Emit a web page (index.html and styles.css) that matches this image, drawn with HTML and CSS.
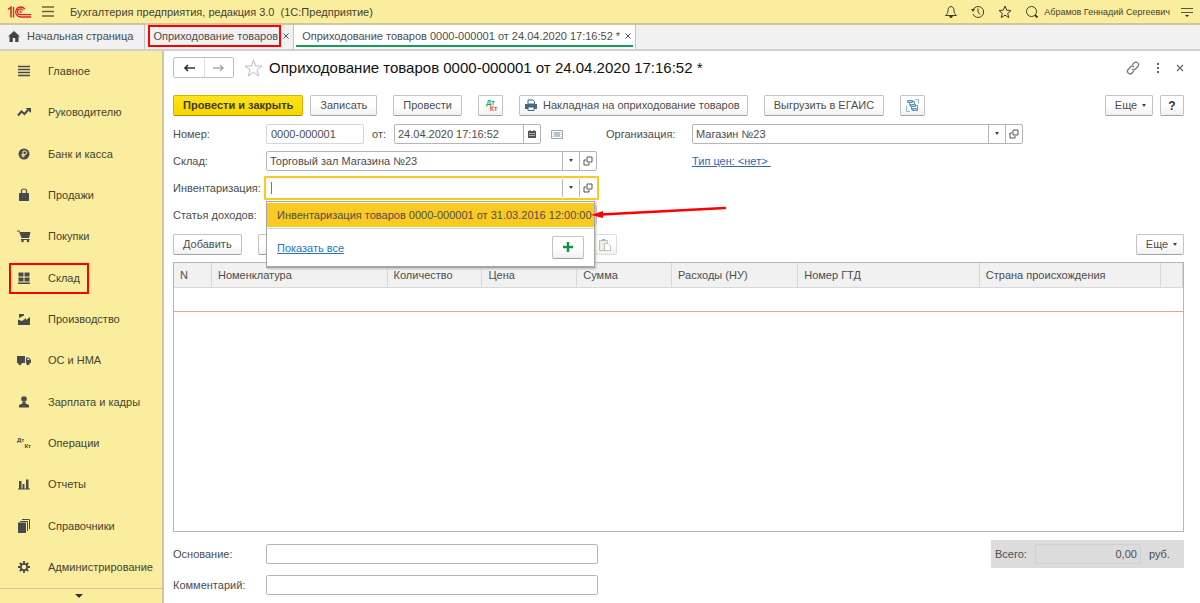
FILE: index.html
```html
<!DOCTYPE html>
<html lang="ru">
<head>
  <meta charset="UTF-8" />
  <meta name="viewport" content="width=device-width, initial-scale=1.0" />
  <title>Оприходование товаров</title>
  <link rel="stylesheet" href="styles.css">
</head>
<body>

<!-- Shared icons -->
<svg class="sprite" aria-hidden="true">
  <symbol id="i-open" viewBox="0 0 10 10">
    <path d="M4 1h5v5H4zM3 4H1v5h5V7" fill="none" stroke="#555" />
  </symbol>
  <symbol id="i-down" viewBox="0 0 6 4">
    <path d="M1 0h4L3 3z" fill="#444" />
  </symbol>
</svg>

<header class="topbar">
  <svg class="logo" width="25" height="14" viewBox="0 0 25 14" fill="none" stroke="#d8232a">
    <path d="M1 4.500L4 2.200V12.500" stroke-width="1.500" />
    <path d="M6.500 2v10.500" stroke-width="1.300" />
    <path d="M17.800 4.200A5 5 0 1 0 13.500 12H24" stroke-width="1.300" />
    <path d="M15.800 5.600A2.800 2.800 0 1 0 13.500 9.600H24" stroke-width="1.200" />
    <circle cx="13.500" cy="6.800" r="0.800" />
  </svg>
  <button class="icon-btn menu-btn" aria-label="Меню">
    <svg width="12" height="11" viewBox="0 0 12 11"><path d="M0 1h12M0 5.500h12M0 10h12" stroke="#6b6540" stroke-width="1.400" /></svg>
  </button>
  <span class="app-title">Бухгалтерия предприятия, редакция 3.0 &nbsp;(1С:Предприятие)</span>
  <div class="top-tools">
    <button class="icon-btn" aria-label="Уведомления">
      <svg width="14" height="14" viewBox="0 0 14 14" fill="none" stroke="#3f3d2c"><path d="M7 1.500C4.500 1.800 4 4 4 6c0 2-1 3-2.500 4.500h11C11 9 10 8 10 6c0-2-.5-4.200-3-4.500z" /><path d="M5.500 11h3L7 13z" fill="#3f3d2c" /></svg>
    </button>
    <button class="icon-btn" aria-label="История">
      <svg width="14" height="14" viewBox="0 0 14 14" fill="none" stroke="#3f3d2c"><path d="M2 5a5.500 5.500 0 1 1 0 4" /><path d="M7 3.500V7l2 2.500" /><path d="M0 4h4L2 7z" fill="#3f3d2c" stroke="none" /></svg>
    </button>
    <button class="icon-btn" aria-label="Избранное">
      <svg width="14" height="14" viewBox="0 0 14 14" fill="none" stroke="#3f3d2c"><path d="M7 1l1.700 4.200 4.300.3-3.300 2.800 1.100 4.300L7 10.200l-3.800 2.400 1.100-4.300L1 5.500l4.300-.3z" /></svg>
    </button>
    <button class="icon-btn" aria-label="Поиск">
      <svg width="14" height="14" viewBox="0 0 14 14" fill="none" stroke="#3f3d2c"><circle cx="6.500" cy="6.500" r="5" /><path d="M10 10l2.500 2.500" stroke-width="2" /></svg>
    </button>
    <span class="user">Абрамов Геннадий Сергеевич</span>
    <button class="icon-btn" aria-label="Настройки">
      <svg width="12" height="12" viewBox="0 0 12 12"><path d="M0 2.500h12M0 6.500h12" stroke="#5a563a" stroke-width="1.200" /><path d="M4 9h4l-2 2z" fill="#222" /></svg>
    </button>
  </div>
</header>

<nav class="tabs">
  <a class="tab tab-home" href="#">
    <svg width="12" height="11" viewBox="0 0 12 11"><path d="M6 0l6 5.500h-1.500V11H7.200V7H4.800v4H1.500V5.500H0z" fill="#444" /></svg>
    Начальная страница
  </a>
  <div class="tab">
    <a class="marked" href="#">Оприходование товаров</a>
    <button class="tab-close" aria-label="Закрыть"><svg width="6" height="6" viewBox="0 0 6 6"><path d="M.5.5l5 5M5.500.5l-5 5" stroke="#555" /></svg></button>
  </div>
  <div class="tab tab-active">
    <a href="#">Оприходование товаров 0000-000001 от 24.04.2020 17:16:52 *</a>
    <button class="tab-close" aria-label="Закрыть"><svg width="6" height="6" viewBox="0 0 6 6"><path d="M.5.5l5 5M5.500.5l-5 5" stroke="#555" /></svg></button>
  </div>
</nav>

<div class="workspace">
  <aside class="sidebar">
    <nav class="sections">
      <a href="#"><svg viewBox="0 0 14 14"><path d="M1 2.500h12M1 5.500h12M1 8.500h12M1 11.500h12" stroke="#4a4a4a" stroke-width="1.500" /></svg>Главное</a>
      <a href="#"><svg viewBox="0 0 14 14"><path d="M1 10.500l3.500-4 3 2.500L11 5" fill="none" stroke="#4a4a4a" stroke-width="2" /><path d="M8.500 3H14v5z" fill="#4a4a4a" /></svg>Руководителю</a>
      <a href="#"><svg viewBox="0 0 14 14"><circle cx="7" cy="7" r="5.500" fill="#4a4a4a" /><path d="M6 10.500V4h2a1.700 1.700 0 0 1 0 3.500H4.500M4.500 9H8" fill="none" stroke="#fbed9e" /></svg>Банк и касса</a>
      <a href="#"><svg viewBox="0 0 14 14"><path d="M2 5h10v8H2z" fill="#4a4a4a" /><path d="M4.500 6V3a2.500 2 0 0 1 5 0v3" fill="none" stroke="#4a4a4a" stroke-width="1.200" /></svg>Продажи</a>
      <a href="#"><svg viewBox="0 0 14 14"><path d="M0 1.500h2.500L3 3h10.500l-1.500 6H4.500L2 2.500H0zM4 10h8.500v1H4z" fill="#4a4a4a" /><circle cx="5.500" cy="12" r="1.300" fill="#4a4a4a" /><circle cx="11" cy="12" r="1.300" fill="#4a4a4a" /></svg>Покупки</a>
      <a class="marked" href="#"><svg viewBox="0 0 14 14"><path d="M1.500 1.500h5v4h-5zM7.500 1.500h5v4h-5zM1.500 6.500h5v4h-5zM7.500 6.500h5v4h-5zM1 11.500h12V13H1z" fill="#4a4a4a" /></svg>Склад</a>
      <a href="#"><svg viewBox="0 0 14 14"><path d="M1 13V7.500l4 1.500 4-3v2l4-3v8zM2 2h5v1.500L2 6z" fill="#4a4a4a" /></svg>Производство</a>
      <a href="#"><svg viewBox="0 0 14 14"><path d="M0 3h8v7H0zM9 4.500h3l2 2.500v3H9z" fill="#4a4a4a" /><circle cx="3" cy="10.500" r="1.700" fill="#4a4a4a" /><circle cx="11" cy="10.500" r="1.700" fill="#4a4a4a" /><path d="M10.500 5.500h1.300l.9 1.500h-2.200z" fill="#fbed9e" /></svg>ОС и НМА</a>
      <a href="#"><svg viewBox="0 0 14 14"><circle cx="7" cy="4" r="2.800" fill="#4a4a4a" /><path d="M2 12.500V10l3.500-1.500V7h3v1.500L12 10v2.500z" fill="#4a4a4a" /></svg>Зарплата и кадры</a>
      <a href="#"><span class="dtkt"><i>Дт</i><b>Кт</b></span>Операции</a>
      <a href="#"><svg viewBox="0 0 14 14"><path d="M2 4h2.500v8H2zM5.500 7h2v5h-2zM9 2.500h2.500V12H9zM1 11.500h12v1H1z" fill="#4a4a4a" /></svg>Отчеты</a>
      <a href="#"><svg viewBox="0 0 14 14"><path d="M1 3.500h8V14H1z" fill="#4a4a4a" /><path d="M3 2.500h7.500V12M5 .5h7.500V10" fill="none" stroke="#4a4a4a" /></svg>Справочники</a>
      <a href="#"><svg viewBox="0 0 14 14"><circle cx="7" cy="7" r="3.200" fill="none" stroke="#4a4a4a" stroke-width="1.800" /><path d="M7 1v2.500M7 10.500V13M1 7h2.500M10.500 7H13M2.800 2.800l1.700 1.700M9.500 9.500l1.700 1.700M11.200 2.800L9.500 4.500M4.500 9.500l-1.700 1.700" stroke="#4a4a4a" stroke-width="1.800" /></svg>Администрирование</a>
    </nav>
    <button class="scroll-down" aria-label="Вниз"><svg width="8" height="4" viewBox="0 0 8 4"><path d="M0 0h8L4 4z" fill="#333" /></svg></button>
  </aside>

  <main class="document">
    <div class="title-row">
      <div class="history">
        <button aria-label="Назад"><svg width="12" height="8" viewBox="0 0 12 8"><path d="M12 4H2M5 1L2 4l3 3" fill="none" stroke="#333" stroke-width="1.700" /></svg></button>
        <button aria-label="Вперед"><svg width="12" height="8" viewBox="0 0 12 8"><path d="M0 4h10M7 1l3 3-3 3" fill="none" stroke="#aaa" stroke-width="1.500" /></svg></button>
      </div>
      <button class="icon-btn" aria-label="В избранное">
        <svg width="19" height="18" viewBox="0 0 19 18"><path d="M9.500 1l2.100 6H18l-5 4 1.800 6-5.300-3.600L4.200 17 6 11 1 7h6.400z" fill="none" stroke="#b5bcc4" /></svg>
      </button>
      <h1>Оприходование товаров 0000-000001 от 24.04.2020 17:16:52 *</h1>
      <div class="window-tools">
        <button class="icon-btn" aria-label="Ссылка"><svg width="14" height="14" viewBox="0 0 14 14" fill="none" stroke="#777" stroke-width="1.200"><path d="M6 4l2-2a2.500 2.500 0 0 1 3.800 3.500L9.500 8A2.300 2.300 0 0 1 6 8" /><path d="M8 10l-2 2a2.500 2.500 0 0 1-3.800-3.500L4.500 6A2.300 2.300 0 0 1 8 6" /></svg></button>
        <button class="icon-btn" aria-label="Действия"><svg width="4" height="10" viewBox="0 0 4 10"><path d="M1 0h2v2H1zM1 4h2v2H1zM1 8h2v2H1z" fill="#666" /></svg></button>
        <button class="icon-btn" aria-label="Закрыть"><svg width="8" height="8" viewBox="0 0 8 8"><path d="M1 1l6 6M7 1L1 7" stroke="#666" stroke-width="1.200" /></svg></button>
      </div>
    </div>

    <div class="toolbar">
      <div class="pair">
        <button class="btn btn-main">Провести и закрыть</button>
        <button class="btn">Записать</button>
      </div>
      <button class="btn">Провести</button>
      <button class="btn btn-square"><span class="dtkt dtkt-color"><i>Дт</i><b>Кт</b></span></button>
      <button class="btn btn-print">
        <svg width="12" height="12" viewBox="0 0 12 12"><path d="M3 1h5l1.500 1.500V5H3z" fill="#fff" stroke="#456985" /><path d="M0 5h12v5H0z" fill="#456985" /><path d="M3 8h6v3.500H3z" fill="#fff" stroke="#456985" /></svg>
        Накладная на оприходование товаров
      </button>
      <button class="btn">Выгрузить в ЕГАИС</button>
      <button class="btn btn-square" aria-label="Структура подчиненности">
        <svg width="13" height="13" viewBox="0 0 13 13" fill="none" stroke="#5b93bb"><path d="M1.500 1.500h5v2h-5zM4.500 5.500h5v2h-5zM6.500 9.500h5v2h-5z" fill="#a9cbe2" /><path d="M7 2.500h1.500V5M10 6.500h1.500V9M3.500 4v2.500M5.500 8v2.500H7" /><path d="M9.500.5h3v4M.5 7v5.500H4" stroke="#8fb9d6" /></svg>
      </button>
      <div class="pair push">
        <button class="btn btn-more">Еще <svg width="6" height="4"><use href="#i-down" /></svg></button>
        <button class="btn btn-square btn-help">?</button>
      </div>
    </div>

    <form class="fields">
      <label for="number">Номер:</label>
      <div class="number-date">
        <input class="text number" id="number" type="text" value="0000-000001">
        <label for="date">от:</label>
        <div class="combo date">
          <input id="date" type="text" value="24.04.2020 17:16:52">
          <button type="button" aria-label="Календарь"><svg width="8" height="8" viewBox="0 0 8 8"><path d="M0 1h8v7H0z" fill="#555" /><path d="M1 3.500h6M1 5.500h6" stroke="#aaa" /><path d="M2 0v2M6 0v2" stroke="#555" /></svg></button>
        </div>
        <svg width="12" height="9" viewBox="0 0 12 9"><path d="M.5.5h11v8H.5z" fill="#fff" stroke="#9aa8b4" /><path d="M3 2h6v5H3z" fill="#b9c3cb" /><path d="M2 2v5M10 2v5" stroke="#b9c3cb" stroke-dasharray="1 1" /></svg>
      </div>
      <label for="org">Организация:</label>
      <div class="combo org">
        <input id="org" type="text" value="Магазин №23">
        <button type="button" aria-label="Выбрать"><svg width="6" height="4"><use href="#i-down" /></svg></button>
        <button type="button" aria-label="Открыть"><svg width="10" height="10"><use href="#i-open" /></svg></button>
      </div>

      <label class="row-start" for="store">Склад:</label>
      <div class="combo">
        <input id="store" type="text" value="Торговый зал Магазина №23">
        <button type="button" aria-label="Выбрать"><svg width="6" height="4"><use href="#i-down" /></svg></button>
        <button type="button" aria-label="Открыть"><svg width="10" height="10"><use href="#i-open" /></svg></button>
      </div>
      <a class="price-type" href="#">Тип цен: &lt;нет&gt;&nbsp;</a>

      <label class="row-start" for="inventory">Инвентаризация:</label>
      <div class="combo combo-focus">
        <span class="caret"></span>
        <input id="inventory" type="text">
        <button type="button" aria-label="Выбрать"><svg width="6" height="4"><use href="#i-down" /></svg></button>
        <button type="button" aria-label="Открыть"><svg width="10" height="10"><use href="#i-open" /></svg></button>
        <div class="suggest">
          <button class="suggest-item" type="button">Инвентаризация товаров 0000-000001 от 31.03.2016 12:00:00</button>
          <div class="suggest-footer">
            <a href="#">Показать все</a>
            <button class="btn btn-add" type="button" aria-label="Создать"><svg width="10" height="10" viewBox="0 0 10 10"><path d="M5 0v10M0 5h10" stroke="#11963f" stroke-width="2.500" /></svg></button>
          </div>
          <svg class="pointer" width="138" height="14" viewBox="0 0 138 14"><path d="M10 8.500L134 2" stroke="#f00" stroke-width="2.500" stroke-linecap="round" /><path d="M0 9l12-4v7z" fill="#f00" /></svg>
        </div>
      </div>

      <label class="row-start" for="income">Статья доходов:</label>
      <div class="combo">
        <input id="income" type="text">
      </div>
    </form>

    <div class="list-bar">
      <div class="list-tools">
        <button class="btn">Добавить</button>
        <button class="btn btn-square" aria-label="Вверх"></button>
        <button class="btn btn-square btn-off push" aria-label="Вставить"><svg width="12" height="12" viewBox="0 0 12 12"><path d="M.5 1.500h8v10h-8z" fill="#f3ece3" stroke="#cdbba6" /><path d="M3 0h3v2H3z" fill="#a8b0b8" /><path d="M5.500 4.500H9L11.500 7v4.500h-6z" fill="#fff" stroke="#b4bec6" /></svg></button>
      </div>
      <button class="btn btn-more push">Еще <svg width="6" height="4"><use href="#i-down" /></svg></button>
    </div>

    <div class="grid">
      <table>
        <thead>
          <tr>
            <th class="c-n">N</th>
            <th class="c-item">Номенклатура</th>
            <th class="c-num">Количество</th>
            <th class="c-num">Цена</th>
            <th class="c-num">Сумма</th>
            <th class="c-cost">Расходы (НУ)</th>
            <th class="c-wide">Номер ГТД</th>
            <th class="c-wide">Страна происхождения</th>
            <th></th>
          </tr>
        </thead>
        <tbody>
          <tr><td colspan="9"></td></tr>
        </tbody>
      </table>
    </div>

    <footer class="bottom">
      <div class="notes">
        <label for="basis">Основание:</label>
        <input class="text" id="basis" type="text">
        <label for="comment">Комментарий:</label>
        <input class="text" id="comment" type="text">
      </div>
      <div class="total">
        <label for="total">Всего:</label>
        <input id="total" type="text" value="0,00" readonly>
        <span>руб.</span>
      </div>
    </footer>
  </main>
</div>

</body>
</html>
```
FILE: styles.css
```css
* {
  box-sizing: border-box;
}

body {
  font-family: "Liberation Sans", Arial, sans-serif;
  font-size: 11px;
  color: #4d4d4d;
  background: #fff;
  margin: 0;
  min-height: 100vh;
  display: flex;
  flex-direction: column;
}

button,
input {
  font: inherit;
  color: inherit;
  margin: 0;
}

button {
  cursor: pointer;
}

svg {
  flex: none;
}

.sprite {
  position: absolute;
  width: 0;
  height: 0;
}

.icon-btn {
  display: flex;
  padding: 0;
  border: none;
  background: none;
}

.push {
  margin-left: auto;
}

/* Top bar */
.topbar {
  display: flex;
  align-items: center;
  height: 25px;
  padding: 0 7px;
  background: #fbed9e;
  border-bottom: 2px solid #cfc79c;
}

.menu-btn {
  margin: 0 16px 0 10px;
}

.app-title {
  color: #45432f;
}

.top-tools {
  display: flex;
  align-items: center;
  gap: 13px;
  margin-left: auto;
}

.user {
  font-size: 9px;
  color: #45432f;
  margin: 0 -2px 0 -8px;
}

/* Tabs */
.tabs {
  display: flex;
  height: 26px;
  background: #f1f1f1;
  border-bottom: 2px solid #d0d0d0;
}

.tab {
  display: flex;
  align-items: center;
  gap: 5px;
  padding: 0 4px 2px 8px;
  border-right: 1px solid #c4c4c4;
}

.tab a,
.tab-home {
  color: #4d4d4d;
  text-decoration: none;
}

.tab-home {
  gap: 7px;
  padding-right: 11px;
}

.tab-active {
  background: #fff;
  box-shadow: inset 2px 0 #fff, inset -2px 0 #fff, inset 0 -2px #fff, inset 0 -4px #12a05a;
}

.tab-close {
  display: flex;
  padding: 0;
  border: none;
  background: none;
}

.marked {
  position: relative;
}

/* Red highlight frame */
.marked::after {
  content: "";
  position: absolute;
  inset: -5px -3px -5px -5px;
  border: 2px solid #f00;
}

.workspace {
  display: flex;
  flex: 1;
}

/* Sidebar */
.sidebar {
  display: flex;
  flex-direction: column;
  flex: none;
  width: 164px;
  background: #fbed9e;
  border-right: 2px solid #cfc79c;
}

.sections {
  display: flex;
  flex-direction: column;
  flex: 1;
}

.sections a {
  display: flex;
  align-items: center;
  flex: 1;
  gap: 17px;
  padding: 0 0 1px 17px;
  color: #45432f;
  text-decoration: none;
}

.sections svg {
  width: 14px;
  height: 14px;
}

.sections .marked::after {
  inset: 5px 73px 5px 9px;
}

.dtkt {
  display: flex;
  flex-direction: column;
  width: 14px;
  font-size: 6px;
  line-height: 6px;
  font-weight: bold;
}

.dtkt i {
  font-style: normal;
}

.dtkt b {
  text-align: right;
}

.dtkt-color {
  font-size: 7px;
}

.dtkt-color i {
  color: #18a35c;
}

.dtkt-color b {
  color: #e8504f;
}

.scroll-down {
  display: flex;
  align-items: center;
  justify-content: center;
  height: 15px;
  padding: 0 4px 0 0;
  border: none;
  border-top: 1px solid #cfc79c;
  background: none;
}

/* Document */
.document {
  display: flex;
  flex-direction: column;
  flex: 1;
  min-width: 0;
  padding: 6px 16px 8px 9px;
}

.title-row {
  display: flex;
  align-items: center;
  gap: 10px;
  margin-bottom: 17px;
}

.history {
  display: flex;
  border: 1px solid #bdbdbd;
  border-radius: 2px;
}

.history button {
  display: flex;
  align-items: center;
  justify-content: center;
  width: 30px;
  height: 19px;
  padding: 0;
  border: none;
  background: #fff;
}

.history button + button {
  width: 29px;
  border-left: 1px solid #ddd;
}

h1 {
  margin: 0 0 0 -4px;
  font-size: 15px;
  line-height: 20px;
  font-weight: normal;
  color: #111;
}

.window-tools {
  display: flex;
  align-items: center;
  gap: 16px;
  margin-left: auto;
}

.btn {
  display: flex;
  align-items: center;
  justify-content: center;
  height: 21px;
  padding: 0 9px 1px;
  border: 1px solid #c3c3c3;
  border-bottom-color: #a3a3a3;
  border-radius: 2px;
  background: linear-gradient(#fff 50%, #f0f0f0);
  white-space: nowrap;
}

.btn-main {
  border-color: #d3b500;
  border-bottom-color: #a98f00;
  background: linear-gradient(#ffe21a, #f6d600);
  font-weight: bold;
  color: #3d3a1e;
}

.btn-square {
  width: 25px;
  padding: 0;
}

.btn-help {
  width: 24px;
  font-size: 12px;
  font-weight: bold;
  color: #333;
}

.btn-print {
  gap: 6px;
  padding: 0 7px 1px 5px;
}

.btn-more {
  gap: 4px;
  width: 48px;
  padding: 0 4px 1px 8px;
}

.btn-more svg {
  margin-top: 2px;
}

.btn-off {
  border-color: #ddd;
}

.toolbar,
.list-tools {
  display: flex;
  gap: 16px;
}

.pair {
  display: flex;
  gap: 7px;
}

.toolbar {
  margin-bottom: 8px;
}

/* Header fields */
.fields {
  display: grid;
  grid-template-columns: 93px minmax(0, 340fr) 86px minmax(0, 331fr) minmax(0, 161fr);
  grid-auto-rows: 20px;
  row-gap: 7px;
  align-items: center;
  margin-bottom: 9px;
}

.row-start {
  grid-column: 1;
}

.text,
.combo {
  height: 20px;
  border: 1px solid #b5b5b5;
  border-radius: 2px;
  background: #fff;
}

.text {
  min-width: 0;
  padding: 0 4px;
}

.combo {
  display: flex;
  position: relative;
  margin-right: 9px;
}

.combo input {
  flex: 1;
  min-width: 0;
  padding: 0 3px 1px;
  border: none;
  background: none;
  outline: none;
}

.combo > button {
  display: flex;
  align-items: center;
  justify-content: center;
  width: 17px;
  padding: 0;
  border: none;
  border-left: 1px solid #b5b5b5;
  background: none;
}

.number-date {
  display: flex;
  align-items: center;
  gap: 8px;
}

.number-date .number {
  width: 98px;
  border-color: #d6d6d6;
}

.combo.date {
  width: 147px;
  margin-right: 2px;
}

.combo.org {
  margin-right: 0;
}

.price-type {
  grid-column: 4;
  color: #2f66b5;
}

.combo-focus {
  border-color: #fff;
  border-radius: 0;
  outline: 2px solid #fbca22;
}

.caret {
  width: 1px;
  height: 12px;
  margin: 3px 0 3px 4px;
  background: #777;
}

/* Suggestions list */
.suggest {
  position: absolute;
  z-index: 1;
  top: 22px;
  left: -1px;
  width: 329px;
  padding: 1px 0 0;
  border: 1px solid #a6a6a6;
  border-bottom-width: 2px;
  background: #fff;
  box-shadow: 1px 1px 2px #bbb;
}

.suggest-item {
  display: block;
  width: 100%;
  height: 24px;
  padding: 0 0 1px 10px;
  border: none;
  background: #fbca22;
  text-align: left;
  white-space: nowrap;
}

.suggest-footer {
  display: flex;
  align-items: center;
  justify-content: space-between;
  height: 38px;
  margin-top: 1px;
  padding: 0 10px;
  border-top: 1px solid #d5d5d5;
}

.suggest-footer a {
  color: #2478b8;
}

.btn-add {
  width: 32px;
  height: 23px;
}

.pointer {
  position: absolute;
  top: 4px;
  left: 324px;
}

/* Goods list */
.list-bar {
  display: flex;
  margin-bottom: 7px;
}

.list-tools {
  width: 444px;
}

.grid {
  flex: 1;
  border: 1px solid #b5b5b5;
}

.grid table {
  width: 100%;
  table-layout: fixed;
  border-spacing: 0;
}

.grid th {
  height: 25px;
  padding: 0 6px 1px;
  border-right: 1px solid #d8d8d8;
  border-bottom: 1px solid #d8d8d8;
  background: #f1f1f1;
  font-weight: normal;
  text-align: left;
  white-space: nowrap;
}

.grid td {
  height: 24px;
  padding: 0;
  border-bottom: 1px solid #f39a9a;
}

.c-n {
  width: 38px;
}

.c-item {
  width: 17.4%;
}

.c-num {
  width: 9.4%;
}

.c-cost {
  width: 12.5%;
}

.c-wide {
  width: 18%;
}

/* Bottom */
.bottom {
  display: flex;
  align-items: flex-start;
  justify-content: space-between;
  padding-top: 8px;
}

.notes {
  display: grid;
  grid-template-columns: 93px 332px;
  gap: 11px 0;
  align-items: center;
  padding-top: 4px;
}

.total {
  display: flex;
  align-items: center;
  gap: 8px;
  width: 193px;
  height: 28px;
  padding: 0 4px;
  background: #dcdcdc;
}

.total input {
  width: 106px;
  height: 20px;
  padding: 0 3px;
  border: 1px solid #d0d0d0;
  border-radius: 2px;
  background: none;
  text-align: right;
}
```
